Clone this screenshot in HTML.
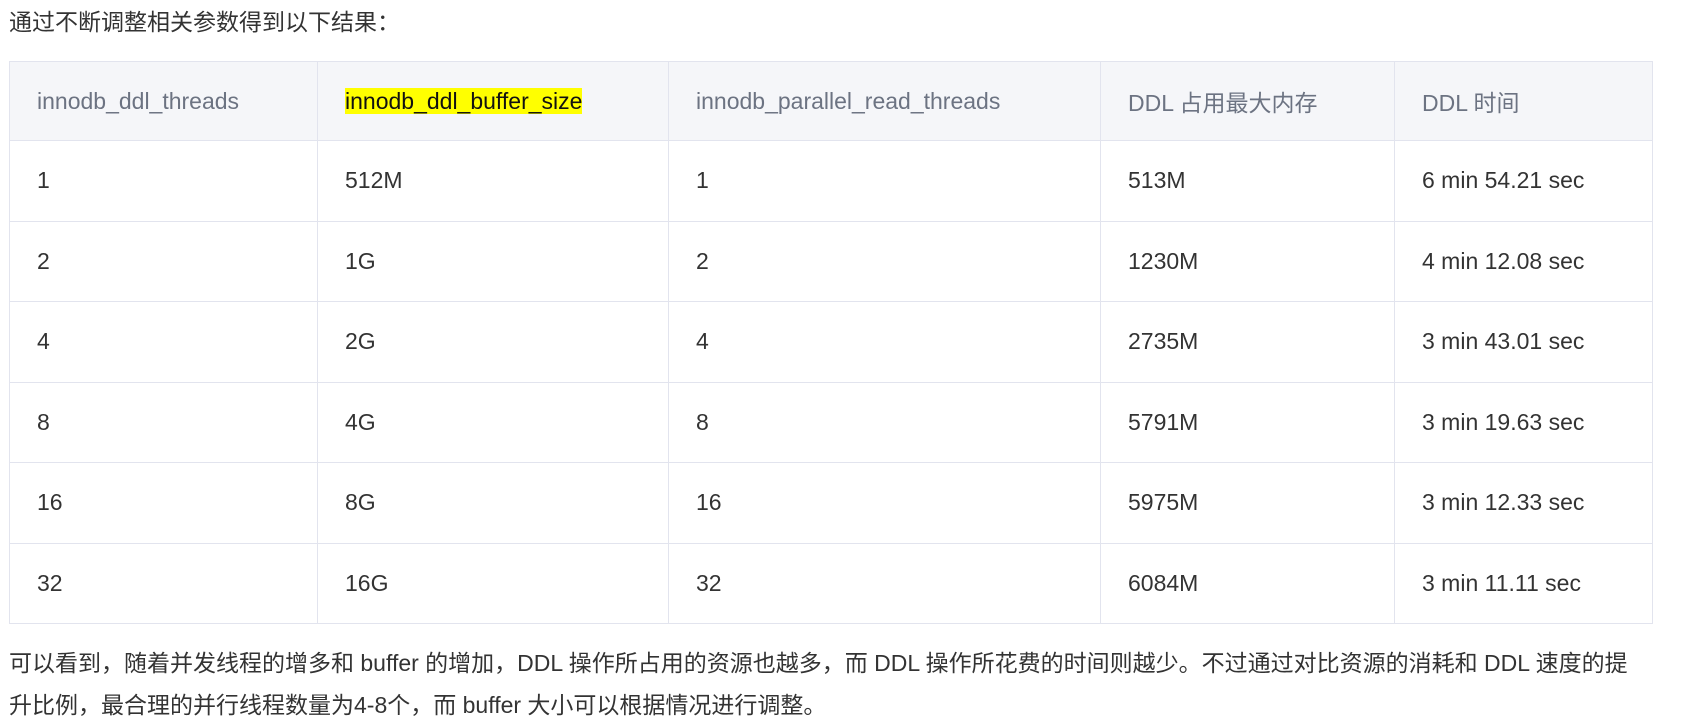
<!DOCTYPE html>
<html><head><meta charset="utf-8"><style>
body{margin:0;background:#fff;font-family:"Liberation Sans","Noto Sans CJK SC",sans-serif;color:#333;font-size:23px;}
.p{position:absolute;left:9px;white-space:nowrap;line-height:42px;}
table{position:absolute;left:9px;top:61px;border-collapse:collapse;table-layout:fixed;width:1643px;}
td,th{border:1px solid #e2e4ee;padding:0 0 0 27px;text-align:left;font-weight:normal;height:79px;box-sizing:border-box;}
th{background:#f5f6f9;color:#6c7382;}
tbody tr td{height:80.5px;color:#333;}
.hl{background:#ffff00;color:#111;}
</style></head><body>
<div class="p" style="top:1px;">通过不断调整相关参数得到以下结果：</div>
<table>
<colgroup><col style="width:308px"><col style="width:351px"><col style="width:432px"><col style="width:294px"><col style="width:258px"></colgroup>
<thead><tr><th>innodb_ddl_threads</th><th><span class="hl">innodb_ddl_buffer_size</span></th><th>innodb_parallel_read_threads</th><th>DDL 占用最大内存</th><th>DDL 时间</th></tr></thead>
<tbody>
<tr><td>1</td><td>512M</td><td>1</td><td>513M</td><td>6 min 54.21 sec</td></tr>
<tr><td>2</td><td>1G</td><td>2</td><td>1230M</td><td>4 min 12.08 sec</td></tr>
<tr><td>4</td><td>2G</td><td>4</td><td>2735M</td><td>3 min 43.01 sec</td></tr>
<tr><td>8</td><td>4G</td><td>8</td><td>5791M</td><td>3 min 19.63 sec</td></tr>
<tr><td>16</td><td>8G</td><td>16</td><td>5975M</td><td>3 min 12.33 sec</td></tr>
<tr><td>32</td><td>16G</td><td>32</td><td>6084M</td><td>3 min 11.11 sec</td></tr>
</tbody></table>
<div class="p" style="top:642px;">可以看到，随着并发线程的增多和 buffer 的增加，DDL 操作所占用的资源也越多，而 DDL 操作所花费的时间则越少。不过通过对比资源的消耗和 DDL 速度的提<br>升比例，最合理的并行线程数量为4-8个，而 buffer 大小可以根据情况进行调整。</div>
</body></html>
